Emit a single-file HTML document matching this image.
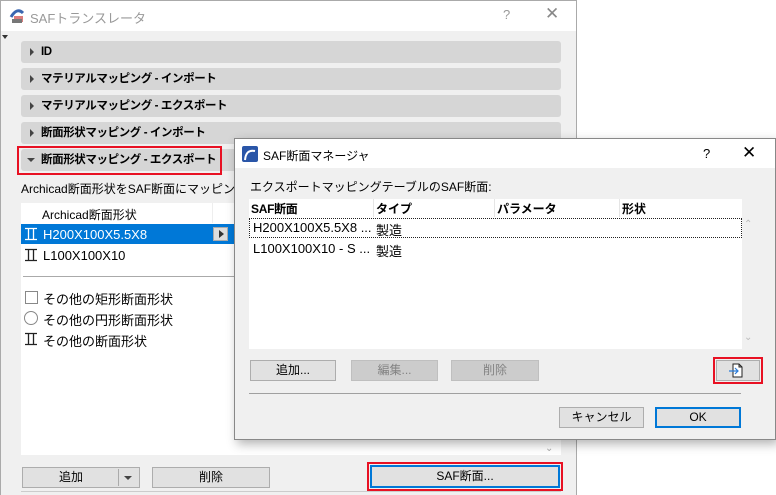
<!DOCTYPE html>
<html><head><meta charset="utf-8"><style>
*{box-sizing:border-box;margin:0;padding:0}
body{width:776px;height:495px;overflow:hidden;background:#fff;font-family:"Liberation Sans","Noto Sans CJK JP",sans-serif;font-size:12px;color:#000;position:relative}
.a{position:absolute}
.bar{position:absolute;left:21px;width:540px;height:22px;background:#d6d6d6;border-radius:3px;font-weight:bold;font-size:11.5px;letter-spacing:-0.4px;line-height:22px;padding-left:20px}
.bar.r:before{content:"";position:absolute;left:9px;top:7px;border-left:4px solid #444;border-top:4px solid transparent;border-bottom:4px solid transparent}
.btn{position:absolute;background:#e1e1e1;border:1px solid #adadad;text-align:center;line-height:19px;font-size:12px}
.dis{background:#ccc;border-color:#bfbfbf;color:#838383}
</style></head><body>
<!-- main window -->
<div class="a" style="left:0;top:0;width:577px;height:495px;background:#f0f0f0;border-right:1px solid #aaa;border-left:1px solid #aaa"></div>
<div class="a" style="left:1px;top:0;width:575px;height:31px;background:#fff;border-top:1px solid #aaa"></div>
<svg class="a" style="left:9px;top:7px" width="18" height="18"><path d="M2 10 Q8 0 14 6" stroke="#3a66b0" stroke-width="3" fill="none"/><rect x="5" y="9" width="9" height="6" fill="#c44" opacity=".7"/><rect x="3" y="12" width="10" height="4" fill="#777"/></svg>
<div class="a" style="left:30px;top:8px;font-size:13px;color:#999">SAFトランスレータ</div>
<div class="a" style="left:503px;top:7px;font-size:13px;color:#999">?</div>
<div class="a" style="left:545px;top:4px;font-size:17px;color:#888">✕</div>
<div class="a" style="left:2px;top:35px;border-top:4px solid #333;border-left:3px solid transparent;border-right:3px solid transparent"></div>
<div class="bar r" style="top:41px">ID</div>
<div class="bar r" style="top:68px">マテリアルマッピング - インポート</div>
<div class="bar r" style="top:95px">マテリアルマッピング - エクスポート</div>
<div class="bar r" style="top:122px">断面形状マッピング - インポート</div>
<div class="bar" style="top:149px">断面形状マッピング - エクスポート</div>
<div class="a" style="left:27px;top:158px;border-top:4px solid #444;border-left:4px solid transparent;border-right:4px solid transparent"></div>
<div class="a" style="left:17px;top:146px;width:205px;height:29px;border:2px solid #e81123"></div>
<div class="a" style="left:21px;top:180px;font-size:12px">Archicad断面形状をSAF断面にマッピング</div>
<div class="a" style="left:21px;top:203px;width:540px;height:252px;background:#fff"></div>
<div class="a" style="left:42px;top:206px">Archicad断面形状</div>
<div class="a" style="left:212px;top:203px;width:1px;height:20px;background:#eee"></div>
<div class="a" style="left:21px;top:224px;width:215px;height:20px;background:#0078d7"></div>
<div class="a" style="left:213px;top:227px;width:15px;height:14px;background:#ddd;border:1px solid #aaa"></div>
<div class="a" style="left:219px;top:230px;border-left:5px solid #333;border-top:4px solid transparent;border-bottom:4px solid transparent"></div>
<svg class="a" style="left:24px;top:227px" width="14" height="14"><path d="M1 1.5H13M1 12.5H13M4.5 1.5V12.5M9.5 1.5V12.5" stroke="#fff" stroke-width="1.3" fill="none"/></svg>
<div class="a" style="left:43px;top:227px;color:#fff;font-size:13px">H200X100X5.5X8</div>
<svg class="a" style="left:24px;top:248px" width="14" height="14"><path d="M1 1.5H13M1 12.5H13M4.5 1.5V12.5M9.5 1.5V12.5" stroke="#222" stroke-width="1.3" fill="none"/></svg>
<div class="a" style="left:43px;top:248px;font-size:13px">L100X100X10</div>
<div class="a" style="left:23px;top:276px;width:215px;height:1px;background:#aaa"></div>
<div class="a" style="left:25px;top:291px;width:13px;height:13px;border:1px solid #888"></div>
<div class="a" style="left:43px;top:289px;font-size:13px">その他の矩形断面形状</div>
<div class="a" style="left:24px;top:311px;width:14px;height:14px;border:1px solid #888;border-radius:50%"></div>
<div class="a" style="left:43px;top:310px;font-size:13px">その他の円形断面形状</div>
<svg class="a" style="left:24px;top:332px" width="14" height="14"><path d="M1 1.5H13M1 12.5H13M4.5 1.5V12.5M9.5 1.5V12.5" stroke="#222" stroke-width="1.3" fill="none"/></svg>
<div class="a" style="left:43px;top:331px;font-size:13px">その他の断面形状</div>
<div class="a" style="left:545px;top:443px;color:#aaa;font-size:10px">⌄</div>
<div class="btn" style="left:22px;top:467px;width:118px;height:21px;padding-right:20px">追加</div>
<div class="a" style="left:118px;top:469px;width:1px;height:17px;background:#aaa"></div>
<div class="a" style="left:124px;top:476px;border-top:4px solid #444;border-left:4px solid transparent;border-right:4px solid transparent"></div>
<div class="btn" style="left:152px;top:467px;width:118px;height:21px">削除</div>
<div class="a" style="left:367px;top:462px;width:196px;height:29px;border:2px solid #e81123"></div>
<div class="btn" style="left:370px;top:465px;width:190px;height:23px;border:2px solid #0078d7;line-height:19px">SAF断面...</div>
<div class="a" style="left:21px;top:491px;width:540px;height:1px;background:#ccc"></div>
<!-- dialog -->
<div class="a" style="left:234px;top:138px;width:542px;height:302px;background:#f0f0f0;border:1px solid #888;box-shadow:3px 4px 10px rgba(0,0,0,.3)"></div>
<div class="a" style="left:235px;top:139px;width:540px;height:29px;background:#fff"></div>
<svg class="a" style="left:242px;top:146px" width="16" height="16"><rect width="16" height="16" rx="2" fill="#2a56a8"/><path d="M3 14 Q4 3 13 5" stroke="#fff" stroke-width="2" fill="none"/></svg>
<div class="a" style="left:263px;top:147px;font-size:12px">SAF断面マネージャ</div>
<div class="a" style="left:703px;top:146px;font-size:13px">?</div>
<div class="a" style="left:742px;top:143px;font-size:17px">✕</div>
<div class="a" style="left:250px;top:178px;font-size:12px">エクスポートマッピングテーブルのSAF断面:</div>
<div class="a" style="left:249px;top:199px;width:493px;height:150px;background:#fff"></div>
<div class="a" style="left:251px;top:200px;font-weight:bold;letter-spacing:-0.3px">SAF断面</div>
<div class="a" style="left:376px;top:200px;font-weight:bold">タイプ</div>
<div class="a" style="left:497px;top:200px;font-weight:bold">パラメータ</div>
<div class="a" style="left:622px;top:200px;font-weight:bold">形状</div>
<div class="a" style="left:373px;top:199px;width:1px;height:18px;background:#e5e5e5"></div>
<div class="a" style="left:494px;top:199px;width:1px;height:18px;background:#e5e5e5"></div>
<div class="a" style="left:619px;top:199px;width:1px;height:18px;background:#e5e5e5"></div>
<div class="a" style="left:249px;top:218px;width:493px;height:20px;border:1px dotted #222"></div>
<div class="a" style="left:253px;top:220px;font-size:13px">H200X100X5.5X8 ...</div>
<div class="a" style="left:376px;top:220px;font-size:13px">製造</div>
<div class="a" style="left:253px;top:241px;font-size:13px">L100X100X10 - S ...</div>
<div class="a" style="left:376px;top:241px;font-size:13px">製造</div>
<div class="a" style="left:744px;top:219px;color:#bbb;font-size:10px">⌃</div>
<div class="a" style="left:744px;top:332px;color:#bbb;font-size:10px">⌄</div>
<div class="btn" style="left:250px;top:360px;width:86px;height:21px">追加...</div>
<div class="btn dis" style="left:351px;top:360px;width:87px;height:21px">編集...</div>
<div class="btn dis" style="left:451px;top:360px;width:88px;height:21px">削除</div>
<div class="a" style="left:713px;top:357px;width:50px;height:27px;border:2px solid #e81123"></div>
<div class="btn" style="left:716px;top:360px;width:44px;height:21px"></div>
<svg class="a" style="left:728px;top:362px" width="18" height="17"><path d="M5 2 H11 L14 5 V15 H5 Z M11 2 V5 H14" stroke="#222" fill="#fff"/><path d="M1 9 H10 M7 6 L10 9 L7 12" stroke="#2a7bd8" fill="none" stroke-width="1.2"/></svg>
<div class="a" style="left:249px;top:393px;width:492px;height:1px;background:#a0a0a0"></div>
<div class="btn" style="left:559px;top:407px;width:85px;height:21px">キャンセル</div>
<div class="btn" style="left:655px;top:407px;width:86px;height:21px;border:2px solid #0078d7;line-height:17px">OK</div>
</body></html>
